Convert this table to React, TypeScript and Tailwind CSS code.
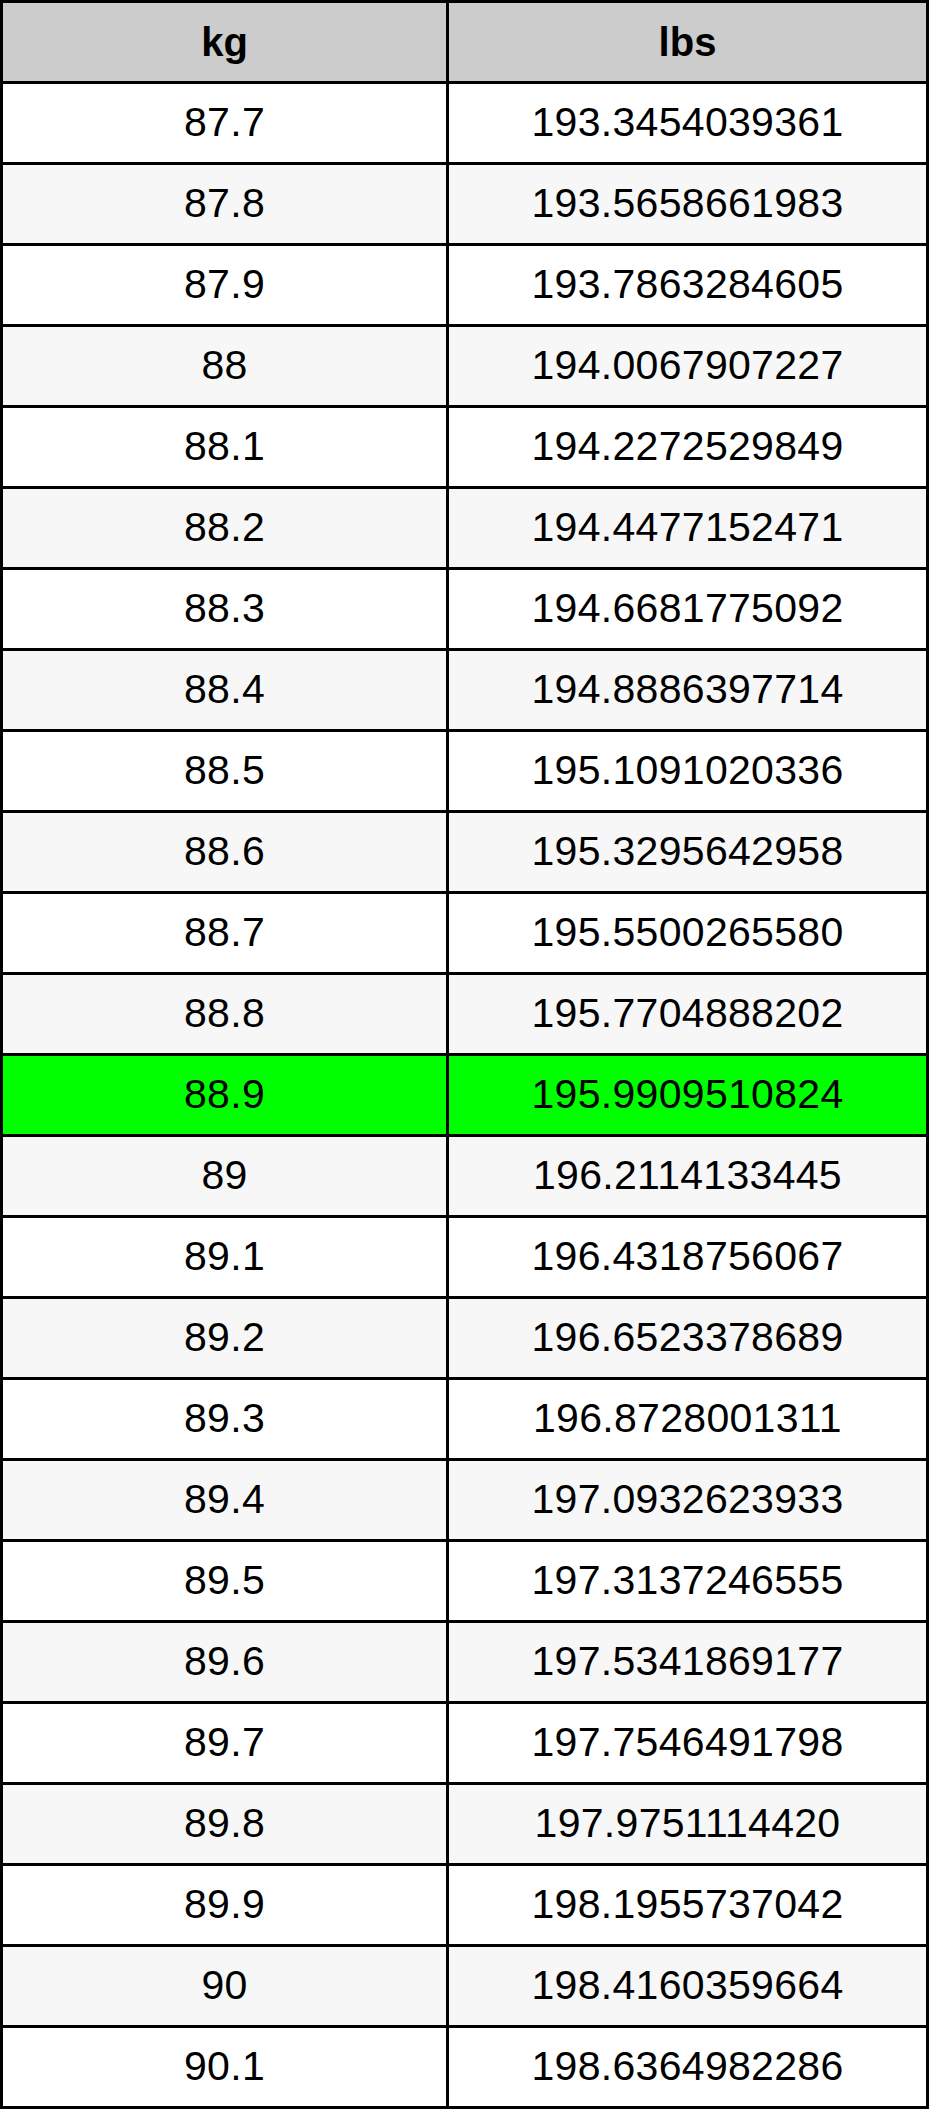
import React from "react";

const rows: [string, string][] = [
  ["87.7", "193.3454039361"],
  ["87.8", "193.5658661983"],
  ["87.9", "193.7863284605"],
  ["88", "194.0067907227"],
  ["88.1", "194.2272529849"],
  ["88.2", "194.4477152471"],
  ["88.3", "194.6681775092"],
  ["88.4", "194.8886397714"],
  ["88.5", "195.1091020336"],
  ["88.6", "195.3295642958"],
  ["88.7", "195.5500265580"],
  ["88.8", "195.7704888202"],
  ["88.9", "195.9909510824"],
  ["89", "196.2114133445"],
  ["89.1", "196.4318756067"],
  ["89.2", "196.6523378689"],
  ["89.3", "196.8728001311"],
  ["89.4", "197.0932623933"],
  ["89.5", "197.3137246555"],
  ["89.6", "197.5341869177"],
  ["89.7", "197.7546491798"],
  ["89.8", "197.9751114420"],
  ["89.9", "198.1955737042"],
  ["90", "198.4160359664"],
  ["90.1", "198.6364982286"],
];

export default function App() {
  return (
    <div className="bg-white w-[930px] h-[2115px]" style={{ fontFamily: '"Liberation Sans", Arial, sans-serif' }}>
      <div className="w-[929px] border-t-[3px] border-black text-black">
        <div className="flex h-[81px] border-b-[3px] border-l-[3px] border-r-[3px] border-black bg-[#cccccc] font-bold text-[40px]">
          <div className="w-[446px] flex items-center justify-center border-r-[3px] border-black">kg</div>
          <div className="flex-1 flex items-center justify-center">lbs</div>
        </div>
        {rows.map(([kg, lbs], i) => {
          const bg = kg === "88.9" ? "bg-[#00ff00]" : i % 2 === 0 ? "bg-white" : "bg-[#f7f7f7]";
          return (
            <div key={kg} className={`flex h-[81px] border-b-[3px] border-l-[3px] border-r-[3px] border-black text-[41px] tracking-[0.3px] ${bg}`}>
              <div className="w-[446px] flex items-center justify-center border-r-[3px] border-black">{kg}</div>
              <div className="flex-1 flex items-center justify-center">{lbs}</div>
            </div>
          );
        })}
      </div>
    </div>
  );
}
